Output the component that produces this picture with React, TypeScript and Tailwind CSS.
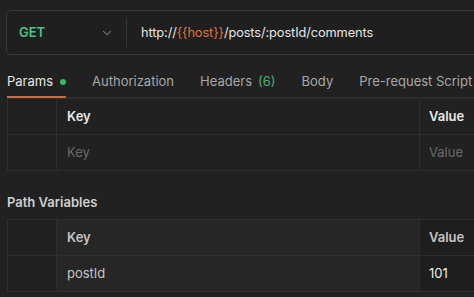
import { ChevronDown } from 'lucide-react'

const tabs = [
  { label: 'Authorization' },
  { label: 'Headers', count: '(6)' },
  { label: 'Body' },
  { label: 'Pre-request Script' },
]

function ParamsTable({
  keyHeadClass,
  rows,
  keyBg,
  valueBg,
}: {
  keyHeadClass: string
  rows: { key: string; value: string; keyClass: string; valueClass: string }[]
  keyBg: string
  valueBg: string
}) {
  return (
    <div className="w-[520px] border border-[#2e2e2e] text-[13px]">
      <div className="flex h-[36px] border-b border-[#2e2e2e]">
        <div className="w-[49px] shrink-0 border-r border-[#2e2e2e]" />
        <div className={`flex w-[363px] shrink-0 items-center border-r border-[#2e2e2e] pl-[10px] font-semibold ${keyBg} ${keyHeadClass}`}>
          Key
        </div>
        <div className={`flex flex-1 items-center pl-[9px] font-semibold ${valueBg} ${keyHeadClass}`}>Value</div>
      </div>
      {rows.map((r) => (
        <div key={r.key} className="flex h-[35px]">
          <div className="w-[49px] shrink-0 border-r border-[#2e2e2e]" />
          <div className={`flex w-[363px] shrink-0 items-center border-r border-[#2e2e2e] pl-[10px] ${keyBg} ${r.keyClass}`}>
            {r.key}
          </div>
          <div className={`flex flex-1 items-center pl-[9px] ${valueBg} ${r.valueClass}`}>{r.value}</div>
        </div>
      ))}
    </div>
  )
}

export default function App() {
  return (
    <div
      className="h-[297px] w-[474px] overflow-hidden bg-[#212121] pl-[6px] text-[#e6e6e6]"
      style={{ fontFamily: "Inter, 'Noto Sans', sans-serif" }}
    >
      {/* URL bar */}
      <div className="mt-[10px] flex h-[45px] w-[520px] items-center rounded-[5px] border border-[#3a3a3a] bg-[#1f1f1f]">
        <div className="flex w-[119px] items-center justify-between pl-[12px] pr-[12px]">
          <span className="text-[13px] font-semibold text-[#4cc486]">GET</span>
          <ChevronDown size={14} strokeWidth={1.6} className="text-[#a0a0a0]" />
        </div>
        <div className="h-[29px] w-px bg-[#333]" />
        <div className="pl-[14px] text-[12.8px] tracking-[-0.1px] text-[#e6e6e6]">
          http://<span className="text-[#e2703a]">{'{{host}}'}</span>/posts/:postId/comments
        </div>
      </div>

      {/* Tabs */}
      <div className="flex h-[43px] w-[520px] items-stretch gap-[26px] border-b border-[#2c2c2c] pl-px text-[13px]">
        <div className="relative flex items-center pt-[11px]">
          <span className="text-[#e6e6e6]">Params</span>
          <span className="ml-[7px] h-[6px] w-[6px] rounded-full bg-[#2fb866]" />
          <span className="absolute bottom-[-1px] left-0 right-0 h-[2px] bg-[#d4693c]" />
        </div>
        {tabs.map((t) => (
          <div key={t.label} className="flex items-center whitespace-nowrap pt-[11px] text-[#a8a8a8]">
            {t.label}
            {t.count && <span className="ml-[6px] text-[#46b27a]">{t.count}</span>}
          </div>
        ))}
      </div>

      <div className="pl-px">
        <ParamsTable
          keyHeadClass="text-[#e8e8e8]"
          keyBg=""
          valueBg=""
          rows={[{ key: 'Key', value: 'Value', keyClass: 'text-[#6a6a6a]', valueClass: 'text-[#6a6a6a]' }]}
        />

        <div className="mt-[23px] mb-[9px] h-[16px] text-[13px] font-semibold leading-[16px] text-[#cfcfcf]">
          Path Variables
        </div>

        <ParamsTable
          keyHeadClass="text-[#c4c4c4]"
          keyBg="bg-[#262626]"
          valueBg="bg-[#1e1e1e]"
          rows={[{ key: 'postId', value: '101', keyClass: 'text-[#c4c4c4]', valueClass: 'text-[#ececec]' }]}
        />
      </div>
    </div>
  )
}
